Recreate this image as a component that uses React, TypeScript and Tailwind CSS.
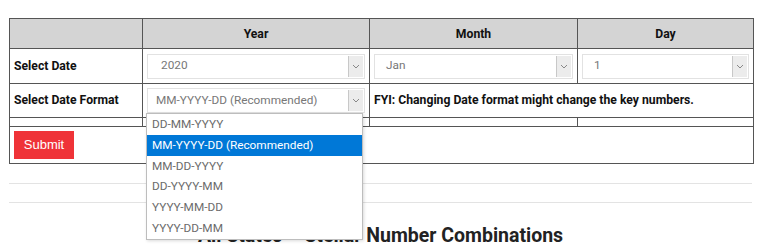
import { useState } from "react";

const formats = [
  "DD-MM-YYYY",
  "MM-YYYY-DD (Recommended)",
  "MM-DD-YYYY",
  "DD-YYYY-MM",
  "YYYY-MM-DD",
  "YYYY-DD-MM",
];

const Chevron = () => (
  <span className="flex items-center justify-center w-[15px] h-full bg-[#ececec] border-l border-[#c8c8c8]">
    <svg width="8" height="5" viewBox="0 0 8 5" fill="none">
      <path d="M1 1l3 3 3-3" stroke="#888" strokeWidth="1" />
    </svg>
  </span>
);

const FakeSelect = ({ value, pad = "pl-[12px]" }: { value: string; pad?: string }) => (
  <div className="flex items-stretch h-[25px] border border-[#e2e2e2] bg-white">
    <span className={`flex-1 flex items-center ${pad} text-[11.8px] text-[#777]`}>{value}</span>
    <div className="py-[1px] pr-[1px]">
      <Chevron />
    </div>
  </div>
);

const App = () => {
  const [selected] = useState(1);

  return (
    <div className="relative w-[768px] h-[249px] overflow-hidden bg-white font-['Roboto',sans-serif] text-[#111]">
      <div className="px-[9px] pt-[18px]">
        {/* Date form */}
        <table className="w-[744px] border-collapse table-fixed text-[12.2px]">
          <colgroup>
            <col className="w-[133px]" />
            <col className="w-[227px]" />
            <col className="w-[208px]" />
            <col className="w-[176px]" />
          </colgroup>
          <thead>
            <tr className="h-[30px] bg-[#d4d4d4]">
              <th className="border border-[#555]"></th>
              <th className="border border-[#555] pt-[1px] font-bold">Year</th>
              <th className="border border-[#555] pt-[1px] font-bold">Month</th>
              <th className="border border-[#555] pt-[1px] font-bold">Day</th>
            </tr>
          </thead>
          <tbody>
            <tr className="h-[35px]">
              <td className="border border-[#555] pl-[4px] font-bold">Select Date</td>
              <td className="border border-[#555] px-[4px]">
                <FakeSelect value="2020" pad="pl-[13px]" />
              </td>
              <td className="border border-[#555] px-[4px]">
                <FakeSelect value="Jan" pad="pl-[11px]" />
              </td>
              <td className="border border-[#555] px-[4px]">
                <FakeSelect value="1" pad="pl-[11px]" />
              </td>
            </tr>
            <tr className="h-[34px]">
              <td className="border border-[#555] pl-[4px] font-bold">Select Date Format</td>
              <td className="border border-[#555] px-[4px]">
                <div className="relative">
                  <FakeSelect value="MM-YYYY-DD (Recommended)" pad="pl-[8px]" />
                  {/* open dropdown list */}
                  <ul className="absolute left-[-1px] top-[25px] z-10 w-[217px] bg-white border border-[#bdbdbd] shadow-[1px_1px_3px_rgba(0,0,0,0.15)] text-[11.8px]">
                    {formats.map((f, i) => (
                      <li
                        key={f}
                        className={`h-[20.8px] leading-[20.8px] pl-[5px] ${
                          i === selected ? "bg-[#0078d7] text-white" : "text-[#6b6b6b]"
                        }`}
                      >
                        {f}
                      </li>
                    ))}
                  </ul>
                </div>
              </td>
              <td colSpan={2} className="border border-[#555] pl-[4px] font-bold">
                FYI: Changing Date format might change the key numbers.
              </td>
            </tr>
            <tr className="h-[9px]">
              <td className="border border-[#555]"></td>
              <td className="border border-[#555]"></td>
              <td className="border border-[#555]"></td>
              <td className="border border-[#555]"></td>
            </tr>
            <tr className="h-[37px]">
              <td colSpan={4} className="border border-[#555] pl-[4px]">
                <button className="w-[60px] h-[28px] bg-[#ef3338] text-white text-[13px] font-['Liberation_Sans',Arial,sans-serif]">
                  Submit
                </button>
              </td>
            </tr>
          </tbody>
        </table>

        <div className="mt-[19px] h-[1px] w-[743px] bg-[#e3e3e3]"></div>
        <div className="mt-[18px] h-[1px] w-[743px] bg-[#e3e3e3]"></div>

        <h2 className="mt-[20px] text-center text-[19.5px] leading-[26px] font-bold text-[#222] w-[743px]">
          All States – Stellar Number Combinations
        </h2>
      </div>
    </div>
  );
};

export default App;
